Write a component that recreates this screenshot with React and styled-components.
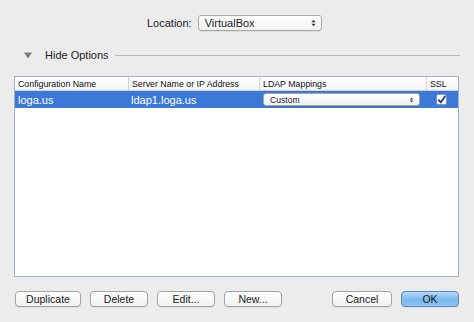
import React from "react";
import styled, { createGlobalStyle } from "styled-components";

const Global = createGlobalStyle`
  html, body {
    margin: 0;
    padding: 0;
    background: #ececec;
  }
  body {
    font-family: "Liberation Sans", Arial, sans-serif;
    color: #1c1c1c;
  }
`;

const Page = styled.div`
  width: 474px;
  height: 322px;
  box-sizing: border-box;
  background: #ececec;
  display: flex;
  flex-direction: column;
  overflow: hidden;
`;

const LocationRow = styled.div`
  display: flex;
  align-items: center;
  gap: 6px;
  padding: 15px 0 0 147px;
  height: 16px;
`;

const Label = styled.span`
  font-size: 11px;
`;

const Popup = styled.div`
  display: flex;
  align-items: center;
  justify-content: space-between;
  box-sizing: border-box;
  width: ${(p) => p.$width}px;
  height: ${(p) => p.$height}px;
  padding: 0 5px 0 6px;
  background: linear-gradient(#ffffff, #f1f1f1);
  border: 1px solid #a6a6a6;
  border-radius: 3px;
  box-shadow: 0 1px 0 rgba(0, 0, 0, 0.06);
  font-size: ${(p) => p.$font}px;
  color: #1c1c1c;
`;

const OptionsRow = styled.div`
  display: flex;
  align-items: center;
  margin-top: 17px;
  padding: 0 14px 0 24px;
  height: 14px;
`;

const Disclosure = styled.svg`
  width: 8px;
  height: 7px;
  margin-right: 13px;
`;

const Rule = styled.div`
  flex: 1;
  height: 1px;
  background: #b9b9b9;
  margin-left: 6px;
`;

const Table = styled.div`
  margin: 14px 15px 0 14px;
  height: 201px;
  box-sizing: border-box;
  border: 1px solid #9fb3cd;
  background: #ffffff;
  display: flex;
  flex-direction: column;
`;

const Cols = "113px 131px 167px 1fr";

const HeaderRow = styled.div`
  display: grid;
  grid-template-columns: ${Cols};
  height: 13px;
  background: linear-gradient(#ffffff, #f4f4f4);
  border-bottom: 1px solid #d0d0d0;
`;

const HeaderCell = styled.div`
  display: flex;
  align-items: center;
  padding-left: 3px;
  font-size: 8.8px;
  color: #111;
  white-space: nowrap;
  border-left: ${(p) => (p.$first ? "none" : "1px solid #d4d4d4")};
`;

const Row = styled.div`
  display: grid;
  grid-template-columns: ${Cols};
  height: 17px;
  background: ${(p) => (p.$selected ? "#3b78d8" : "transparent")};
`;

const Cell = styled.div`
  display: flex;
  align-items: center;
  padding-left: ${(p) => p.$pad ?? 3}px;
  font-size: 11px;
  color: #ffffff;
  white-space: nowrap;
`;

const CheckBox = styled.div`
  width: 11px;
  height: 11px;
  box-sizing: border-box;
  background: #ffffff;
  border: 1px solid #7f98c0;
  border-radius: 2px;
  display: flex;
  align-items: center;
  justify-content: center;
  margin-left: 6px;
`;

const ButtonBar = styled.div`
  display: flex;
  align-items: center;
  padding: 14px 15px 0 15px;
`;

const Button = styled.button`
  box-sizing: border-box;
  width: ${(p) => p.$width}px;
  height: 16px;
  margin-left: ${(p) => p.$gap || 0}px;
  padding: 0;
  font-family: "Liberation Sans", Arial, sans-serif;
  font-size: 10.5px;
  color: #1a1a1a;
  border-radius: 4px;
  border: 1px solid ${(p) => (p.$primary ? "#5b87bf" : "#a3a3a3")};
  background: ${(p) =>
    p.$primary
      ? "linear-gradient(#b6daf8, #79b8ee 55%, #8cc4f2)"
      : "linear-gradient(#ffffff, #f0f0f0)"};
  box-shadow: 0 1px 0 rgba(0, 0, 0, 0.05);
`;

const Spacer = styled.div`
  flex: 1;
`;

function Arrows({ size = 7 }) {
  return (
    <svg width="5" height={size} viewBox="0 0 5 8">
      <path d="M0.5 3.2 L2.5 0.8 L4.5 3.2 Z" fill="#333" />
      <path d="M0.5 4.8 L2.5 7.2 L4.5 4.8 Z" fill="#333" />
    </svg>
  );
}

export default function App() {
  return (
    <Page>
      <Global />
      <LocationRow>
        <Label>Location:</Label>
        <Popup $width={124} $height={16} $font={11}>
          <span>VirtualBox</span>
          <Arrows size={8} />
        </Popup>
      </LocationRow>

      <OptionsRow>
        <Disclosure viewBox="0 0 8 7">
          <path d="M0 0.5 L8 0.5 L4 6.5 Z" fill="#7c7c7c" />
        </Disclosure>
        <Label>Hide Options</Label>
        <Rule />
      </OptionsRow>

      <Table>
        <HeaderRow>
          <HeaderCell $first>Configuration Name</HeaderCell>
          <HeaderCell>Server Name or IP Address</HeaderCell>
          <HeaderCell>LDAP Mappings</HeaderCell>
          <HeaderCell>SSL</HeaderCell>
        </HeaderRow>
        <Row $selected>
          <Cell>loga.us</Cell>
          <Cell>ldap1.loga.us</Cell>
          <Cell $pad={4}>
            <Popup $width={157} $height={13} $font={8.6}>
              <span>Custom</span>
              <Arrows size={6} />
            </Popup>
          </Cell>
          <Cell $pad={4}>
            <CheckBox>
              <svg width="10" height="10" viewBox="0 0 10 10">
                <path
                  d="M2 5.2 L4.2 7.8 L9 0.8"
                  fill="none"
                  stroke="#1d3f8c"
                  strokeWidth="2"
                  strokeLinecap="round"
                  strokeLinejoin="round"
                />
              </svg>
            </CheckBox>
          </Cell>
        </Row>
      </Table>

      <ButtonBar>
        <Button $width={66}>Duplicate</Button>
        <Button $width={58} $gap={9}>Delete</Button>
        <Button $width={58} $gap={9}>Edit...</Button>
        <Button $width={58} $gap={9}>New...</Button>
        <Spacer />
        <Button $width={60}>Cancel</Button>
        <Button $width={58} $gap={9} $primary>OK</Button>
      </ButtonBar>
    </Page>
  );
}
